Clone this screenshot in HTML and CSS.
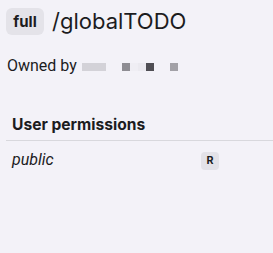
FILE: index.html
```html
<!DOCTYPE html>
<html>
<head>
<meta charset="utf-8">
<link rel="stylesheet" href="styles.css">
</head>
<body>
<div class="page">
  <div class="title-row">
    <span class="badge">full</span>
    <h1 class="title">/globalTODO</h1>
  </div>
  <div class="owner">
    <span>Owned by</span>
    <span class="redact">
      <i class="px w24 c1"></i><i class="px w16 c0"></i><i class="px w8 c2"></i><i class="px w8 c3"></i><i class="px w8 c4"></i><i class="px w8 c5"></i><i class="px w16 c0"></i><i class="px w8 c6"></i>
    </span>
  </div>
  <table class="perms">
    <thead>
      <tr><th colspan="2">User permissions</th></tr>
    </thead>
    <tbody>
      <tr><td class="who">public</td><td class="lvl"><span class="tag">R</span></td></tr>
    </tbody>
  </table>
</div>
</body>
</html>
```
FILE: styles.css
```css
html, body { margin: 0; padding: 0; }
body {
  background: #f3f2f8;
  font-family: Roboto, "Noto Sans", sans-serif;
  color: #1c1c1e;
}
.page { padding: 8px 6px; }
.title-row { display: flex; align-items: center; gap: 8px; }
.badge {
  display: inline-flex; align-items: center; justify-content: center;
  width: 38px; height: 27px; box-sizing: border-box;
  background: #e4e3e9; border-radius: 6px;
  font-family: Inter, sans-serif;
  font-weight: 700; font-size: 15px; color: #1c1c1e;
}
.title { margin: 0; font-family: Inter, sans-serif; font-size: 22px; font-weight: 400; line-height: 27px; }
.owner { display: flex; align-items: center; margin-top: 21px; font-size: 16px; line-height: 20px; padding-left: 1px; }
.redact { display: flex; height: 8px; margin-left: 5px; margin-top: 2px; }
.px { display: block; height: 8px; }
.w24 { width: 24px; } .w16 { width: 16px; } .w8 { width: 8px; }
.c0 { background: transparent; }
.c1 { background: #d3d2d8; }
.c2 { background: #8e8d93; }
.c3 { background: #efeef4; }
.c4 { background: #ebeaf0; }
.c5 { background: #4f4e54; }
.c6 { background: #a2a1a7; }
.perms { border-collapse: collapse; width: calc(100% + 6px); margin-top: 39px; }
.perms th {
  text-align: left; font-family: Inter, sans-serif; font-size: 15.6px; font-weight: 700;
  padding: 0 6px 5px; border-bottom: 1px solid #d8d8dd; line-height: 20px;
}
.perms td { padding: 9px 6px 10px; font-size: 16px; line-height: 20px; }
.who { font-style: italic; width: 177px; }
.tag {
  display: inline-flex; align-items: center; justify-content: center;
  width: 18px; height: 18px; border-radius: 4px; background: #e3e2e8;
  font-size: 11px; font-weight: 700; vertical-align: middle;
}
```
